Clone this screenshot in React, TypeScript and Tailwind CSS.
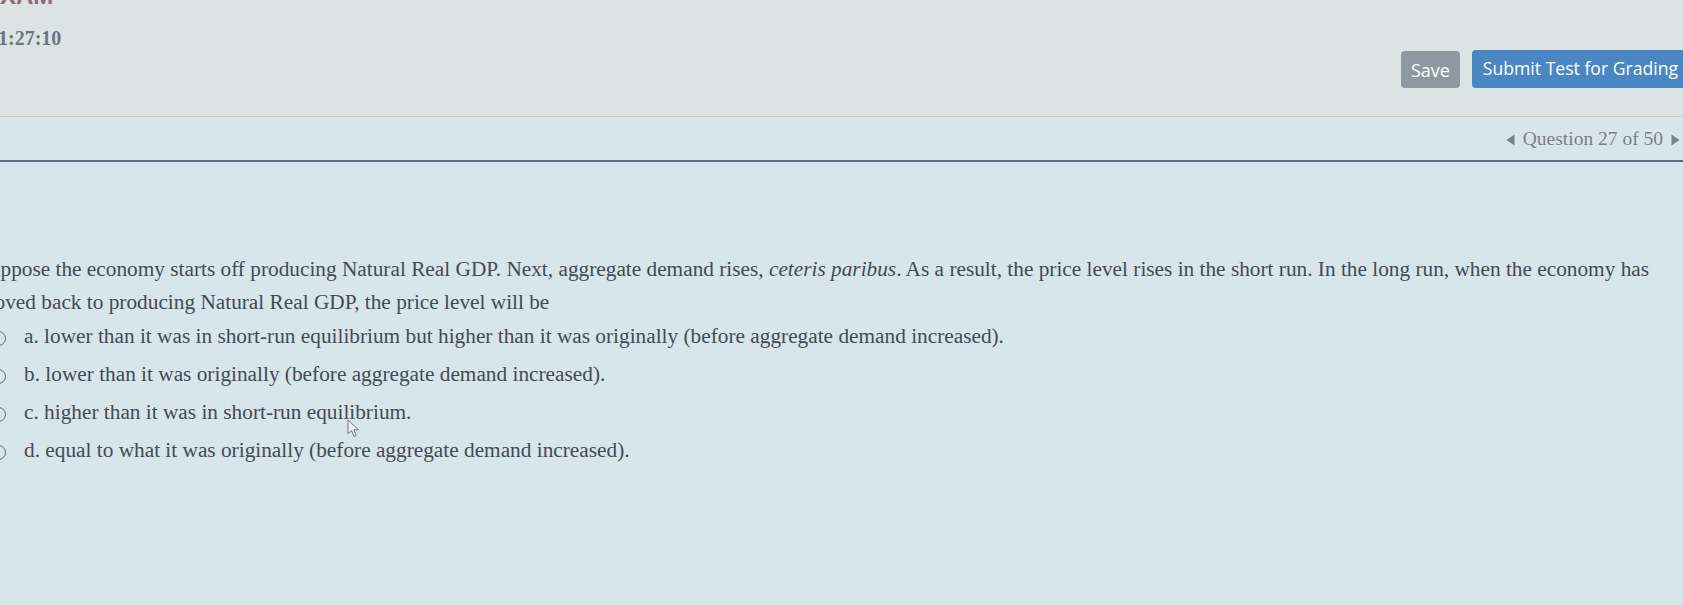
import React from 'react';

const serif = { fontFamily: '"Liberation Serif", "Times New Roman", serif' };

const options = [
  { key: 'a', text: 'lower than it was in short-run equilibrium but higher than it was originally (before aggregate demand increased).' },
  { key: 'b', text: 'lower than it was originally (before aggregate demand increased).' },
  { key: 'c', text: 'higher than it was in short-run equilibrium.' },
  { key: 'd', text: 'equal to what it was originally (before aggregate demand increased).' },
];

function Cursor() {
  return (
    <svg className="absolute left-[347px] top-[419px]" width="14" height="20" viewBox="0 0 14 20">
      <path d="M1 1 L1 15 L4.5 11.5 L7 17.5 L9.2 16.6 L6.8 10.8 L11.5 10.8 Z" fill="#e8f1f3" stroke="#6f7a86" strokeWidth="1" strokeLinejoin="round" />
    </svg>
  );
}

function Tri({ dir }: { dir: 'left' | 'right' }) {
  return (
    <svg width="9" height="12" viewBox="0 0 9 12" className="mt-[2px]">
      {dir === 'left' ? <path d="M8.5 0.5 L8.5 11.5 L0.5 6 Z" fill="#7b818b" /> : <path d="M0.5 0.5 L0.5 11.5 L8.5 6 Z" fill="#7b818b" />}
    </svg>
  );
}

export default function App() {
  return (
    <div className="relative w-full h-[605px] overflow-hidden bg-[#d7e6ea] text-[#434b56]">
      {/* header */}
      <header className="h-[117px] bg-[#dbe3e3] border-b border-[#c4cdce] flex justify-between">
        <div className="flex flex-col">
          <div
            className="-mt-[16px] -ml-[16px] text-[24px] leading-[24px] font-bold text-[#8a6c70]"
            style={{ fontFamily: '"Liberation Sans", Arial, sans-serif' }}
          >
            EXAM
          </div>
          <div className="mt-[18px] -ml-[2px] text-[20px] leading-[24px] font-bold text-[#6c7586]" style={serif}>
            1:27:10
          </div>
        </div>
        <div
          className="flex items-start gap-[12px] pt-[50px] -mr-[6px]"
          style={{ fontFamily: '"Open Sans", "Noto Sans", sans-serif' }}
        >
          <button className="h-[37px] mt-[1px] px-[10px] rounded-[4px] bg-[#8d999f] text-white text-[18px] leading-none">
            Save
          </button>
          <button className="h-[38px] px-[11px] rounded-[4px] bg-[#4a86c1] text-white text-[17.6px] leading-none">
            Submit Test for Grading
          </button>
        </div>
      </header>

      {/* question nav */}
      <div className="h-[45px] border-b-2 border-[#5e6a8a] flex items-center justify-end gap-[8px] pr-[3px] text-[#7b8089]">
        <Tri dir="left" />
        <span className="text-[19.5px]" style={serif}>Question 27 of 50</span>
        <Tri dir="right" />
      </div>

      {/* question */}
      <main className="pt-[91px]" style={serif}>
        <p className="-ml-[22px] text-[21.3px] leading-[33px] whitespace-nowrap">
          Suppose the economy starts off producing Natural Real GDP. Next, aggregate demand rises,{' '}
          <i>ceteris paribus</i>. As a result, the price level rises in the short run. In the long run, when the economy has
          <br />
          moved back to producing Natural Real GDP, the price level will be
        </p>
        <div className="-ml-[9px] -mt-[1px] flex flex-col">
          {options.map((o) => (
            <label key={o.key} className="h-[38px] flex items-center gap-[18px] text-[21.3px] whitespace-nowrap">
              <span className="w-[15px] h-[15px] rounded-full border-[1.5px] border-[#5f6874] shrink-0 mt-[2px]" />
              <span>
                {o.key}. {o.text}
              </span>
            </label>
          ))}
        </div>
      </main>

      <Cursor />
    </div>
  );
}
